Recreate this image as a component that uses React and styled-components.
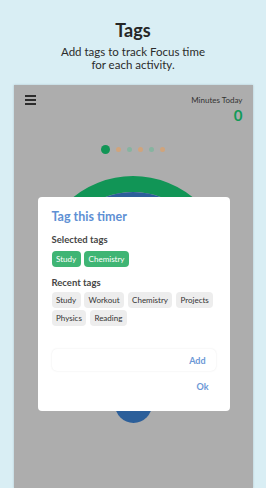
import React from "react";
import styled, { createGlobalStyle } from "styled-components";

const GlobalStyle = createGlobalStyle`
  * { box-sizing: border-box; }
  html, body {
    margin: 0;
    padding: 0;
    background: #d9eef4;
    font-family: "Lato", "Open Sans", sans-serif;
    overflow: hidden;
  }
`;

const Page = styled.div`
  width: 266px;
  height: 488px;
  display: flex;
  flex-direction: column;
  align-items: center;
`;

const Heading = styled.h1`
  margin: 19px 0 0;
  font-size: 18px;
  font-weight: 700;
  color: #262626;
  line-height: 22px;
`;

const Subtitle = styled.p`
  margin: 4px 0 0;
  font-size: 11.5px;
  line-height: 13px;
  color: #2b2b2b;
  text-align: center;
`;

const Phone = styled.div`
  position: relative;
  margin-top: 14px;
  width: 239px;
  flex: 1;
  background: #adadad;
  box-shadow: 0 0 2px rgba(90, 120, 130, 0.35);
  display: flex;
  flex-direction: column;
  align-items: center;
`;

const TopBar = styled.div`
  align-self: stretch;
  display: flex;
  justify-content: space-between;
  align-items: flex-start;
  padding: 10px 10px 0 11px;
`;

const Burger = styled.div`
  display: flex;
  flex-direction: column;
  gap: 2.5px;
  span {
    display: block;
    width: 11px;
    height: 1.6px;
    background: #2c2c2c;
  }
`;

const Stats = styled.div`
  display: flex;
  flex-direction: column;
  align-items: flex-end;
  font-size: 8px;
  line-height: 9px;
  color: #333;
  margin-top: 1px;
`;

const Count = styled.div`
  font-size: 15px;
  font-weight: 700;
  color: #129a58;
  line-height: 16px;
  margin-top: 2px;
`;

const Dots = styled.div`
  display: flex;
  align-items: center;
  gap: 6px;
  margin-top: 22px;
`;

const Dot = styled.span`
  width: ${(p) => (p.$big ? 9 : 5)}px;
  height: ${(p) => (p.$big ? 9 : 5)}px;
  border-radius: 50%;
  background: ${(p) => p.$color};
`;

const Ring = styled.div`
  margin-top: 22px;
  width: 190px;
  height: 190px;
  border-radius: 50%;
  border: 16px solid #119556;
  display: flex;
  justify-content: center;
  align-items: center;
`;

const Track = styled.div`
  width: 158px;
  height: 158px;
  border-radius: 50%;
  border: 5px solid #b8b8b8;
  border-top-color: #2c5f9a;
`;

const PlayButton = styled.div`
  margin-top: 20px;
  width: 37px;
  height: 37px;
  border-radius: 50%;
  background: #2c5f9a;
`;

const Dialog = styled.div`
  position: absolute;
  left: 24px;
  top: 112px;
  width: 192px;
  height: 214px;
  background: #fff;
  border-radius: 4px;
  padding: 12px 14px 0;
  display: flex;
  flex-direction: column;
`;

const DialogTitle = styled.div`
  font-size: 12.5px;
  font-weight: 700;
  color: #5e90d4;
  line-height: 16px;
`;

const Label = styled.div`
  margin-top: ${(p) => p.$top}px;
  font-size: 9.5px;
  font-weight: 700;
  color: #454545;
  line-height: 12px;
`;

const ChipRow = styled.div`
  display: flex;
  flex-wrap: wrap;
  gap: 2px 3.5px;
  margin-top: ${(p) => p.$top}px;
`;

const Chip = styled.span`
  height: 16px;
  padding: 0 4.5px;
  border-radius: 4px;
  font-size: 8px;
  line-height: 16px;
  background: ${(p) => (p.$selected ? "#3fb574" : "#ededed")};
  color: ${(p) => (p.$selected ? "#fff" : "#333")};
`;

const InputBox = styled.div`
  margin-top: 23px;
  height: 22px;
  border-radius: 5px;
  box-shadow: 0 0 2px rgba(0, 0, 0, 0.1);
  display: flex;
  justify-content: flex-end;
  align-items: center;
  padding-right: 10px;
`;

const TextButton = styled.span`
  font-size: 9px;
  font-weight: 700;
  color: ${(p) => p.$color || "#6b98d6"};
`;

const Footer = styled.div`
  display: flex;
  justify-content: flex-end;
  margin-top: 10px;
  padding-right: 7px;
`;

const dotColors = ["#d0a47c", "#86b4a0", "#d0a47c", "#86b4a0", "#d0a47c"];
const selected = ["Study", "Chemistry"];
const recent = ["Study", "Workout", "Chemistry", "Projects", "Physics", "Reading"];

export default function App() {
  return (
    <Page>
      <GlobalStyle />
      <Heading>Tags</Heading>
      <Subtitle>
        Add tags to track Focus time
        <br />
        for each activity.
      </Subtitle>
      <Phone>
        <TopBar>
          <Burger>
            <span />
            <span />
            <span />
          </Burger>
          <Stats>
            Minutes Today
            <Count>0</Count>
          </Stats>
        </TopBar>
        <Dots>
          <Dot $big $color="#119556" />
          {dotColors.map((c, i) => (
            <Dot key={i} $color={c} />
          ))}
        </Dots>
        <Ring>
          <Track />
        </Ring>
        <PlayButton />

        <Dialog>
          <DialogTitle>Tag this timer</DialogTitle>
          <Label $top={9}>Selected tags</Label>
          <ChipRow $top={5}>
            {selected.map((t) => (
              <Chip key={t} $selected>
                {t}
              </Chip>
            ))}
          </ChipRow>
          <Label $top={10}>Recent tags</Label>
          <ChipRow $top={3}>
            {recent.map((t) => (
              <Chip key={t}>{t}</Chip>
            ))}
          </ChipRow>
          <InputBox>
            <TextButton>Add</TextButton>
          </InputBox>
          <Footer>
            <TextButton>Ok</TextButton>
          </Footer>
        </Dialog>
      </Phone>
    </Page>
  );
}
